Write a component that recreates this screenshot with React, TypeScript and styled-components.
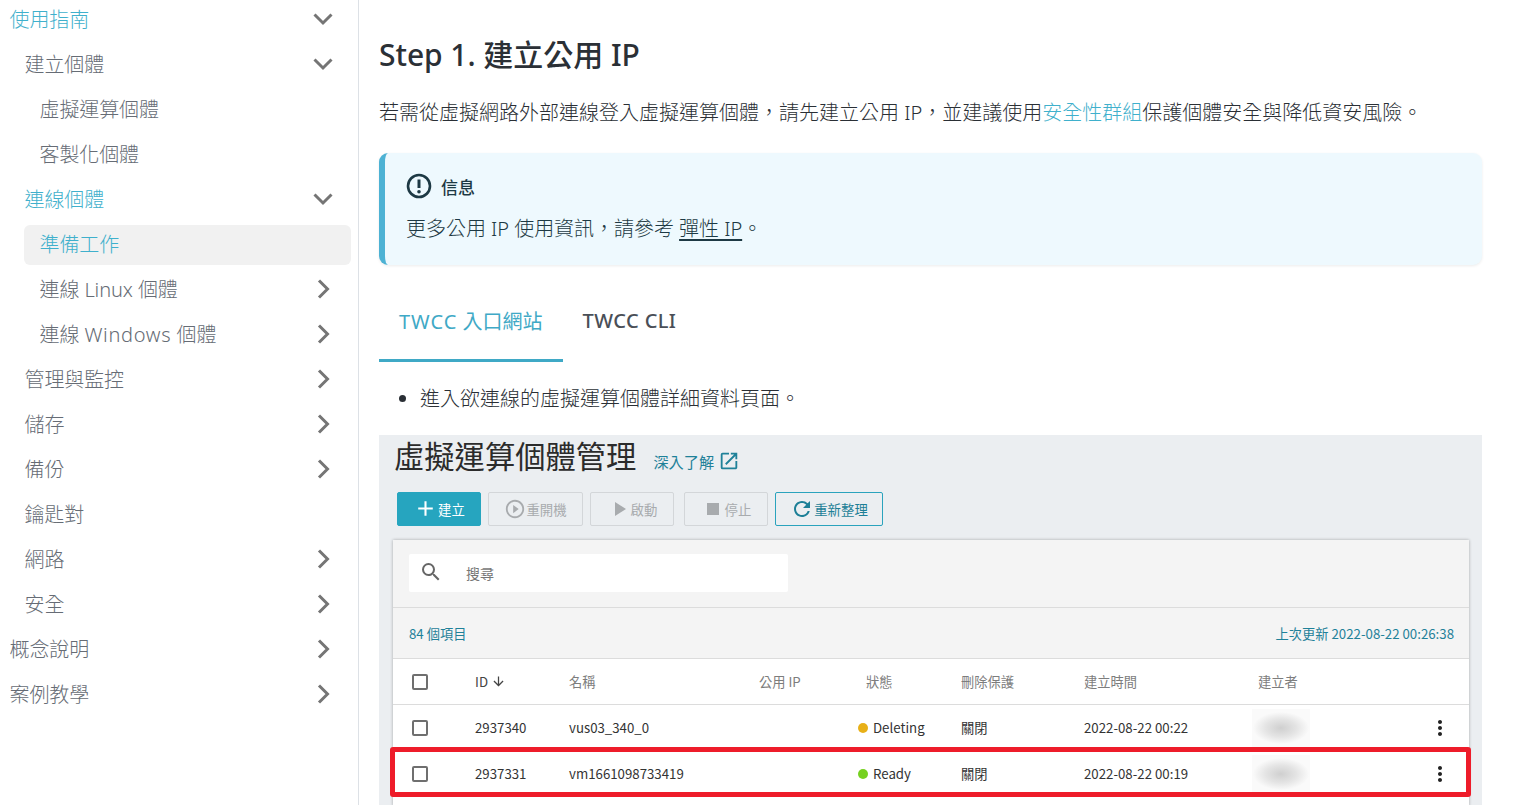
import { createGlobalStyle, styled } from "styled-components";
import {
  MdAdd,
  MdArrowDownward,
  MdMoreVert,
  MdOpenInNew,
  MdPlayArrow,
  MdPlayCircleOutline,
  MdRefresh,
  MdSearch,
  MdStop,
} from "react-icons/md";

const CJK = `"Noto Sans", "Noto Sans CJK TC", sans-serif`;
const SHOT = `"Noto Sans CJK TC", sans-serif`;

const GlobalStyle = createGlobalStyle`
  html, body {
    margin: 0;
    padding: 0;
    height: 805px;
    overflow: hidden;
    background: #fff;
    font-family: ${CJK};
  }
`;

const Page = styled.div`
  display: flex;
  width: 1520px;
  height: 805px;
  overflow: hidden;
`;

/* sidebar */
const Sidebar = styled.nav`
  width: 358px;
  height: 805px;
  flex-shrink: 0;
  border-right: 1px solid #dde1e6;
  display: flex;
  flex-direction: column;
  gap: 5px;
`;

const NavRow = styled.div<{ $level: number; $active?: boolean; $current?: boolean }>`
  height: 40px;
  flex-shrink: 0;
  display: flex;
  align-items: center;
  justify-content: space-between;
  box-sizing: border-box;
  margin: 0 7px 0 ${(p) => (p.$level === 2 ? 24 : 0)}px;
  padding-left: ${(p) => (p.$level === 0 ? 9.5 : p.$level === 1 ? 24.5 : 15.5)}px;
  padding-right: 18px;
  padding-bottom: 2px;
  font-size: 20px;
  font-weight: 300;
  letter-spacing: -0.1px;
  color: ${(p) => (p.$active ? "#3fb0cc" : "#666c75")};
  background: ${(p) => (p.$current ? "#f1f1f1" : "transparent")};
  border-radius: 6px;
`;

const NavLabel = styled.span`
  margin-bottom: 2px;
`;

const WideLatin = styled.span<{ $spacing: number }>`
  letter-spacing: ${(p) => p.$spacing}px;
`;

const Chevron = ({ open }: { open?: boolean }) => (
  <svg width="20" height="20" viewBox="0 0 20 20" fill="none" stroke="#757575" strokeWidth="3">
    <path d={open ? "M1.5 5.5 L10 14 L18.5 5.5" : "M6 1.5 L14.5 10 L6 18.5"} />
  </svg>
);

const InfoIcon = () => (
  <svg width="26" height="26" viewBox="0 0 26 26" fill="none" stroke="#1d3944">
    <circle cx="13" cy="13" r="11" strokeWidth="2.6" />
    <path d="M13 6.5 V15" strokeWidth="3" />
    <circle cx="13" cy="18.8" r="1.8" fill="#1d3944" stroke="none" />
  </svg>
);

const navItems: { label: React.ReactNode; key: string; level: number; active?: boolean; current?: boolean; arrow?: "open" | "closed" }[] = [
  { key: "guide", label: "使用指南", level: 0, active: true, arrow: "open" },
  { key: "create", label: "建立個體", level: 1, arrow: "open" },
  { key: "vm", label: "虛擬運算個體", level: 2 },
  { key: "custom", label: "客製化個體", level: 2 },
  { key: "connect", label: "連線個體", level: 1, active: true, arrow: "open" },
  { key: "prep", label: "準備工作", level: 2, active: true, current: true },
  { key: "linux", label: "連線 Linux 個體", level: 2, arrow: "closed" },
  {
    key: "windows",
    label: (
      <>
        連線 <WideLatin $spacing={0.7}>Windows</WideLatin> 個體
      </>
    ),
    level: 2,
    arrow: "closed",
  },
  { key: "manage", label: "管理與監控", level: 1, arrow: "closed" },
  { key: "storage", label: "儲存", level: 1, arrow: "closed" },
  { key: "backup", label: "備份", level: 1, arrow: "closed" },
  { key: "keys", label: "鑰匙對", level: 1 },
  { key: "net", label: "網路", level: 1, arrow: "closed" },
  { key: "security", label: "安全", level: 1, arrow: "closed" },
  { key: "concept", label: "概念說明", level: 0, arrow: "closed" },
  { key: "cases", label: "案例教學", level: 0, arrow: "closed" },
];

/* article */
const Main = styled.main`
  width: 1103px;
  margin-left: 20px;
  flex-shrink: 0;
`;

const Title = styled.h1`
  margin: 33px 0 0;
  font-size: 30px;
  line-height: 44px;
  font-weight: 500;
  letter-spacing: -0.05px;
  color: #2b3036;
`;

const Lead = styled.p`
  margin: 21px 0 0;
  font-size: 20px;
  line-height: 30px;
  font-weight: 300;
  color: #2a2f35;
`;

const Accent = styled.span`
  color: #3fb0cc;
`;

const InfoBox = styled.section`
  margin-top: 25px;
  height: 112px;
  box-sizing: border-box;
  padding: 19px 20px 0 21px;
  background: #eef9fe;
  border-left: 6px solid #4db2d4;
  border-radius: 9px;
  box-shadow: 0 1px 3px rgba(0, 0, 0, 0.08);
`;

const InfoTitle = styled.div`
  display: flex;
  align-items: center;
  gap: 9px;
  height: 28px;
  font-size: 17px;
  font-weight: 500;
  color: #1d3944;
`;

const InfoText = styled.div`
  margin-top: 14px;
  font-size: 20px;
  line-height: 30px;
  font-weight: 300;
  letter-spacing: -0.03px;
  color: #1d3944;
`;

const InfoLink = styled.a`
  color: #1d3944;
  text-decoration: underline;
  text-underline-offset: 3px;
`;

const Tabs = styled.div`
  margin-top: 16px;
  height: 81px;
  display: flex;
`;

const Tab = styled.div<{ $active?: boolean }>`
  padding: 0 20px;
  display: flex;
  align-items: center;
  box-sizing: border-box;
  font-size: 20px;
  font-weight: ${(p) => (p.$active ? 400 : 500)};
  color: ${(p) => (p.$active ? "#3fa9c6" : "#4a4f57")};
  border-bottom: 3px solid ${(p) => (p.$active ? "#3fa9c6" : "transparent")};
`;

const Steps = styled.ul`
  margin: 22px 0 0;
  padding-left: 41px;
  font-size: 20px;
  line-height: 30px;
  font-weight: 300;
  color: #2a2f35;
`;

/* embedded console screenshot */
const Shot = styled.figure`
  margin: 21px 0 0;
  height: 370px;
  background: #ebeef1;
  font-family: ${SHOT};
  padding: 0 13px 0 14px;
  box-sizing: border-box;
`;

const ShotHead = styled.div`
  height: 44px;
  display: flex;
  align-items: flex-start;
  gap: 17px;
`;

const ShotTitle = styled.div`
  font-size: 30.3px;
  line-height: 40px;
  padding-left: 1px;
  color: #2b2b2b;
`;

const LearnMore = styled.div`
  display: flex;
  align-items: center;
  gap: 4px;
  margin-top: 15px;
  font-size: 15.2px;
  color: #1f8199;
`;

const Toolbar = styled.div`
  margin: 13px 0 0 4px;
  display: flex;
`;

const ToolButton = styled.div<{ $width: number; $gap: number; $kind?: "primary" | "outline" }>`
  width: ${(p) => p.$width}px;
  height: 34px;
  margin-right: ${(p) => p.$gap}px;
  padding-bottom: 1px;
  box-sizing: border-box;
  display: flex;
  align-items: center;
  justify-content: center;
  font-size: 13.4px;
  border-radius: 2px;
  border: 1px solid
    ${(p) => (p.$kind === "primary" ? "#26a5bf" : p.$kind === "outline" ? "#2aa3bd" : "#d3d6d9")};
  background: ${(p) => (p.$kind === "primary" ? "#26a5bf" : "transparent")};
  color: ${(p) => (p.$kind === "primary" ? "#fff" : p.$kind === "outline" ? "#1d7f97" : "#a8abae")};
`;

const Card = styled.div`
  margin-top: 14px;
  height: 266px;
  background: #fff;
  box-shadow: 0 0 3px rgba(0, 0, 0, 0.3);
`;

const SearchBar = styled.div`
  height: 68px;
  padding: 14px 16px 0;
  box-sizing: border-box;
  background: #f4f4f4;
  border-bottom: 1px solid #dcdcdc;
`;

const SearchField = styled.div`
  width: 379px;
  height: 38px;
  background: #fff;
  border-radius: 2px;
  display: flex;
  align-items: center;
  gap: 23px;
  padding-left: 10px;
  box-sizing: border-box;
  font-size: 14px;
  color: #777;
  svg {
    margin-top: -3px;
    color: #666;
  }
`;

const CountBar = styled.div`
  height: 51px;
  padding: 0 15px 0 16px;
  box-sizing: border-box;
  display: flex;
  align-items: center;
  justify-content: space-between;
  background: #f4f4f4;
  border-bottom: 1px solid #dcdcdc;
  font-size: 13.25px;
  color: #1f8199;
`;

const Row = styled.div<{ $head?: boolean }>`
  position: relative;
  height: 46px;
  display: grid;
  grid-template-columns: 82px 94px 190px 99px 103px 123px 168px 100px 1fr;
  align-items: center;
  box-sizing: border-box;
  border-bottom: 1px solid #dcdcdc;
  font-size: 13.25px;
  color: ${(p) => (p.$head ? "#7d7d7d" : "#333")};
`;

const CheckCell = styled.div`
  padding-left: 19px;
  display: flex;
`;

const CheckBox = styled.span`
  width: 16px;
  height: 16px;
  box-sizing: border-box;
  border: 2px solid #6f6f6f;
  border-radius: 2px;
`;

const HeadCell = styled.div<{ $indent?: number }>`
  padding-left: ${(p) => p.$indent ?? 0}px;
  display: flex;
  align-items: center;
  gap: 3px;
`;

const IdHead = styled(HeadCell)`
  color: #444;
`;

const StatusCell = styled.div`
  display: flex;
  align-items: center;
  gap: 5px;
`;

const StatusDot = styled.span<{ $color: string }>`
  width: 10px;
  height: 10px;
  border-radius: 50%;
  background: ${(p) => p.$color};
`;

const Blurred = styled.div`
  width: 58px;
  height: 38px;
  background: radial-gradient(ellipse 28px 16px at center, #cfcfcf 0%, #e4e4e4 55%, #fafafa 100%);
`;

const Kebab = styled.div`
  display: flex;
  justify-content: flex-end;
  padding-right: 17px;
  color: #222;
`;

const Highlight = styled.div`
  position: absolute;
  left: -3px;
  right: -2px;
  top: -4px;
  bottom: -1px;
  border: 5px solid #ee1c2a;
  border-radius: 3px;
  pointer-events: none;
`;

const rows = [
  { id: "2937340", name: "vus03_340_0", status: "Deleting", dot: "#e8b018", time: "2022-08-22 00:22" },
  { id: "2937331", name: "vm1661098733419", status: "Ready", dot: "#76d120", time: "2022-08-22 00:19", marked: true },
];

export default function App() {
  return (
    <Page>
      <GlobalStyle />
      <Sidebar>
        {navItems.map((item) => (
          <NavRow key={item.key} $level={item.level} $active={item.active} $current={item.current}>
            <NavLabel>{item.label}</NavLabel>
            {item.arrow && <Chevron open={item.arrow === "open"} />}
          </NavRow>
        ))}
      </Sidebar>
      <Main>
        <Title>Step 1. 建立公用 IP</Title>
        <Lead>
          若需從虛擬網路外部連線登入虛擬運算個體，請先建立公用 IP，並建議使用<Accent>安全性群組</Accent>
          保護個體安全與降低資安風險。
        </Lead>
        <InfoBox>
          <InfoTitle>
            <InfoIcon />
            信息
          </InfoTitle>
          <InfoText>
            更多公用 IP 使用資訊，請參考 <InfoLink>彈性 IP</InfoLink>。
          </InfoText>
        </InfoBox>
        <Tabs>
          <Tab $active>
            <span>
              <WideLatin $spacing={1}>TWCC</WideLatin> 入口網站
            </span>
          </Tab>
          <Tab>
            <WideLatin $spacing={0.4}>TWCC CLI</WideLatin>
          </Tab>
        </Tabs>
        <Steps>
          <li>進入欲連線的虛擬運算個體詳細資料頁面。</li>
        </Steps>
        <Shot>
          <ShotHead>
            <ShotTitle>虛擬運算個體管理</ShotTitle>
            <LearnMore>
              深入了解
              <MdOpenInNew size={22} />
            </LearnMore>
          </ShotHead>
          <Toolbar>
            <ToolButton $width={84} $gap={7} $kind="primary">
              <MdAdd size={25} />
              建立
            </ToolButton>
            <ToolButton $width={95} $gap={7}>
              <MdPlayCircleOutline size={22} />
              重開機
            </ToolButton>
            <ToolButton $width={84} $gap={10}>
              <MdPlayArrow size={24} />
              啟動
            </ToolButton>
            <ToolButton $width={84} $gap={7}>
              <MdStop size={24} />
              停止
            </ToolButton>
            <ToolButton $width={108} $gap={0} $kind="outline">
              <MdRefresh size={24} />
              重新整理
            </ToolButton>
          </Toolbar>
          <Card>
            <SearchBar>
              <SearchField>
                <MdSearch size={24} />
                搜尋
              </SearchField>
            </SearchBar>
            <CountBar>
              <span>84 個項目</span>
              <span>上次更新 2022-08-22 00:26:38</span>
            </CountBar>
            <Row $head>
              <CheckCell>
                <CheckBox />
              </CheckCell>
              <IdHead>
                ID <MdArrowDownward size={15} />
              </IdHead>
              <HeadCell>名稱</HeadCell>
              <HeadCell>公用 IP</HeadCell>
              <HeadCell $indent={8}>狀態</HeadCell>
              <HeadCell>刪除保護</HeadCell>
              <HeadCell>建立時間</HeadCell>
              <HeadCell $indent={6}>建立者</HeadCell>
              <div />
            </Row>
            {rows.map((row) => (
              <Row key={row.id}>
                <CheckCell>
                  <CheckBox />
                </CheckCell>
                <div>{row.id}</div>
                <div>{row.name}</div>
                <div />
                <StatusCell>
                  <StatusDot $color={row.dot} />
                  {row.status}
                </StatusCell>
                <div>關閉</div>
                <div>{row.time}</div>
                <Blurred />
                <Kebab>
                  <MdMoreVert size={24} />
                </Kebab>
                {row.marked && <Highlight />}
              </Row>
            ))}
          </Card>
        </Shot>
      </Main>
    </Page>
  );
}
